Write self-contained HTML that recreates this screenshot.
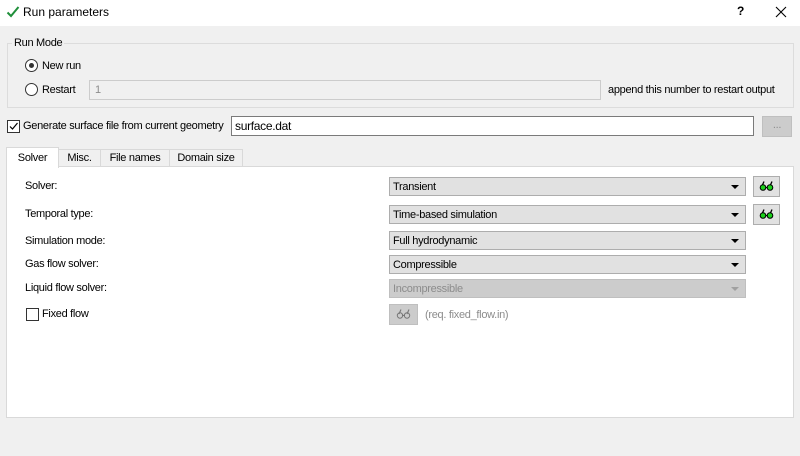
<!DOCTYPE html>
<html><head><meta charset="utf-8"><style>
*{box-sizing:border-box;margin:0;padding:0}
body{width:800px;height:456px;background:#f0f0f0;font-family:"Liberation Sans",sans-serif;font-size:11px;letter-spacing:-0.3px;color:#000;position:relative;overflow:hidden}
.a{position:absolute}
.t{position:absolute;white-space:nowrap;line-height:13px}
.combo{position:absolute;left:389px;width:357px;height:19px;background:#e1e1e1;border:1px solid #adadad;padding-left:3px;line-height:18px}
.combo:after{content:"";position:absolute;right:6px;top:7px;border-left:4px solid transparent;border-right:4px solid transparent;border-top:4px solid #000}
.combo.dis{color:#8c8c8c;background:#ccc;border-color:#bfbfbf}
.combo.dis:after{border-top-color:#a0a0a0}
.btn{position:absolute;background:#e1e1e1;border:1px solid #adadad}
.radio{position:absolute;width:13px;height:13px;border:1px solid #333;border-radius:50%;background:#fff}
.chk{position:absolute;width:13px;height:13px;border:1px solid #333;background:#fff}
.tab{position:absolute;top:149px;height:18px;border:1px solid #d9d9d9;background:#f0f0f0;text-align:center;line-height:17px}
</style></head><body>
<div class="a" style="left:0;top:0;width:800px;height:26px;background:#fff"></div>
<svg class="a" style="left:6px;top:5px" width="14" height="14" viewBox="0 0 14 14"><path d="M1.5 7.5 L5 11 L12.5 2" stroke="#1f8f3a" stroke-width="2" fill="none"/></svg>
<div class="t" style="left:23px;top:6px;font-size:12px;letter-spacing:0">Run parameters</div>
<div class="t" style="left:737px;top:5px;font-size:12px;font-weight:bold">?</div>
<svg class="a" style="left:775px;top:6px" width="12" height="12"><path d="M1 1L11 11M11 1L1 11" stroke="#000" stroke-width="1.1"/></svg>

<div class="a" style="left:7px;top:43px;width:787px;height:65px;border:1px solid #dcdcdc"></div>
<div class="t" style="left:12px;top:37px;background:#f0f0f0;padding:0 2px">Run Mode</div>
<div class="radio" style="left:25px;top:59px"></div><div class="a" style="left:29px;top:63px;width:5px;height:5px;border-radius:50%;background:#333"></div>
<div class="t" style="left:42px;top:60px">New run</div>
<div class="radio" style="left:25px;top:83px"></div>
<div class="t" style="left:42px;top:84px">Restart</div>
<div class="a" style="left:89px;top:80px;width:512px;height:20px;background:#f0f0f0;border:1px solid #ccc;color:#8c8c8c;padding-left:5px;line-height:18px">1</div>
<div class="t" style="left:608px;top:84px">append this number to restart output</div>

<div class="chk" style="left:7px;top:120px"></div>
<svg class="a" style="left:8px;top:121px" width="11" height="11"><path d="M2 5.5L4.5 8L9.5 2" stroke="#000" stroke-width="1.2" fill="none"/></svg>
<div class="t" style="left:23px;top:120px">Generate surface file from current geometry</div>
<div class="a" style="left:231px;top:116px;width:523px;height:20px;background:#fff;border:1px solid #7a7a7a;padding-left:3px;line-height:18px;font-size:12px">surface.dat</div>
<div class="btn" style="left:762px;top:116px;width:30px;height:21px;background:#ccc;border-color:#bfbfbf;color:#8c8c8c;text-align:center;line-height:17px">...</div>

<div class="a" style="left:6px;top:166px;width:788px;height:252px;background:#fff;border:1px solid #d9d9d9"></div>
<div class="tab" style="left:58px;width:43px">Misc.</div>
<div class="tab" style="left:100px;width:70px">File names</div>
<div class="tab" style="left:169px;width:74px">Domain size</div>
<div class="tab" style="left:6px;top:147px;width:53px;height:21px;background:#fff;border-bottom:none;line-height:20px">Solver</div>

<div class="t" style="left:25px;top:180px">Solver:</div>
<div class="t" style="left:25px;top:208px">Temporal type:</div>
<div class="t" style="left:25px;top:235px">Simulation mode:</div>
<div class="t" style="left:25px;top:258px">Gas flow solver:</div>
<div class="t" style="left:25px;top:282px">Liquid flow solver:</div>
<div class="chk" style="left:26px;top:308px"></div>
<div class="t" style="left:42px;top:308px">Fixed flow</div>

<div class="combo" style="top:177px">Transient</div>
<div class="combo" style="top:205px">Time-based simulation</div>
<div class="combo" style="top:231px">Full hydrodynamic</div>
<div class="combo" style="top:255px">Compressible</div>
<div class="combo dis" style="top:279px">Incompressible</div>

<div class="btn" style="left:753px;top:176px;width:27px;height:21px"></div>
<div class="btn" style="left:753px;top:204px;width:27px;height:21px"></div>
<svg class="a" style="left:759px;top:180px" width="15" height="11"><path d="M3 6L5 1.5M11 6L13 1.5M6 7.5H9" stroke="#000" stroke-width="1.3" fill="none"/><circle cx="4" cy="7.5" r="2.8" fill="#1bd01b" stroke="#000"/><circle cx="11" cy="7.5" r="2.8" fill="#1bd01b" stroke="#000"/></svg>
<svg class="a" style="left:759px;top:208px" width="15" height="11"><path d="M3 6L5 1.5M11 6L13 1.5M6 7.5H9" stroke="#000" stroke-width="1.3" fill="none"/><circle cx="4" cy="7.5" r="2.8" fill="#1bd01b" stroke="#000"/><circle cx="11" cy="7.5" r="2.8" fill="#1bd01b" stroke="#000"/></svg>
<div class="btn" style="left:389px;top:304px;width:29px;height:21px;background:#ccc;border-color:#bfbfbf"></div>
<svg class="a" style="left:396px;top:308px" width="15" height="11"><path d="M3 6L5 1.5M11 6L13 1.5M6 7.5H9" stroke="#777" stroke-width="1.1" fill="none"/><circle cx="4" cy="7.5" r="2.7" fill="none" stroke="#777"/><circle cx="11" cy="7.5" r="2.7" fill="none" stroke="#777"/></svg>
<div class="t" style="left:425px;top:309px;color:#8c8c8c">(req. fixed_flow.in)</div>
</body></html>
